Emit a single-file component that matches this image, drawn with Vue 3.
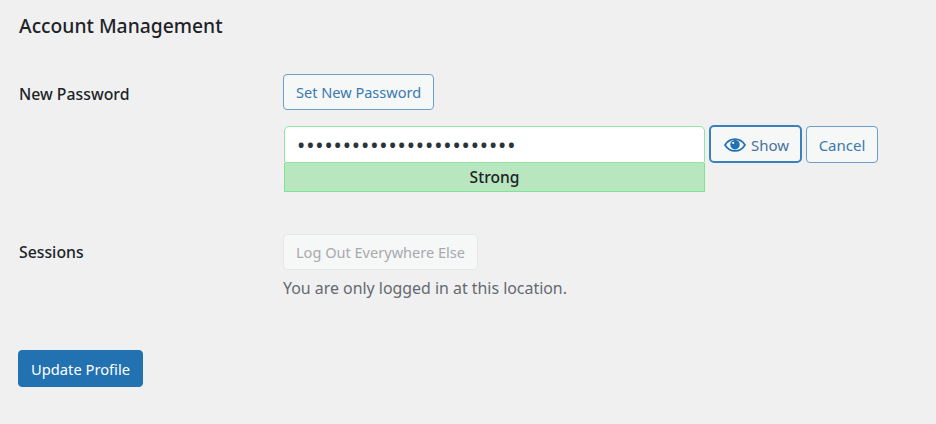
<script setup>
const dots = '•'.repeat(24)
</script>

<template>
  <main class="page">
    <h2 class="title">Account Management</h2>

    <section class="row password-row">
      <div class="label">New Password</div>
      <div class="field">
        <button class="btn" type="button">Set New Password</button>
        <div class="pass-line">
          <div class="pass-col">
            <div class="pass-input">{{ dots }}</div>
            <div class="strength">Strong</div>
          </div>
          <button class="btn show" type="button">
            <svg class="eye" viewBox="0 0 26 16" aria-hidden="true">
              <path d="M1.200 8C4 3.400 8.200 1 13 1s9 2.400 11.800 7c-2.800 4.600-7 7-11.800 7S4 12.600 1.200 8z" fill="none" stroke="#2271b1" stroke-width="2"/>
              <circle cx="13" cy="7.600" r="5.600" fill="#2271b1"/>
              <circle cx="10.800" cy="5.600" r="1.300" fill="#f6f7f7"/>
            </svg>
            <span class="lift">Show</span>
          </button>
          <button class="btn cancel" type="button"><span class="lift">Cancel</span></button>
        </div>
      </div>
    </section>

    <section class="row sessions-row">
      <div class="label">Sessions</div>
      <div class="field">
        <button class="btn disabled" type="button">Log Out Everywhere Else</button>
        <p class="note">You are only logged in at this location.</p>
      </div>
    </section>

    <button class="primary" type="button"><span class="lift">Update Profile</span></button>
  </main>
</template>

<style scoped>
.page {
  box-sizing: border-box;
  width: 936px;
  height: 424px;
  padding: 14px 0 0 18px;
  background: #f0f0f1;
  color: #1d2327;
  font-family: "Noto Sans", "Open Sans", sans-serif;
  overflow: hidden;
}
.title {
  margin: 0;
  padding-left: 1px;
  font-size: 19.300px;
  line-height: 24px;
  font-weight: 500;
}
.row {
  display: flex;
}
.label {
  width: 265px;
  flex: none;
  padding-left: 1px;
  box-sizing: border-box;
  font-size: 15.800px;
  line-height: 22px;
  font-weight: 500;
}
.password-row {
  margin-top: 36px;
}
.password-row .label {
  padding-top: 9px;
}
.field {
  display: flex;
  flex-direction: column;
  align-items: flex-start;
}
.btn {
  box-sizing: border-box;
  height: 36px;
  padding: 0 12px;
  border: 1px solid #6a9fcb;
  border-radius: 4px;
  background: #f6f7f7;
  color: #3a7ab0;
  font: 400 14.550px/1 "Noto Sans", "Open Sans", sans-serif;
  white-space: nowrap;
}
.lift {
  display: block;
  padding-top: 2px;
}
.pass-line {
  display: flex;
  align-items: flex-start;
  margin-top: 16px;
  margin-left: 1px;
}
.pass-col {
  width: 421px;
}
.pass-input {
  box-sizing: border-box;
  height: 37px;
  padding-left: 12px;
  border: 1px solid #8fe6a0;
  border-radius: 5px 5px 2px 2px;
  background: #fff;
  color: #2c3338;
  font: 400 22px/35px "Noto Sans", sans-serif;
  letter-spacing: 0.870px;
}
.strength {
  box-sizing: border-box;
  height: 29px;
  border: 1px solid #82e296;
  border-top: 0;
  background: #b8e6bf;
  color: #1d2327;
  font-size: 15.600px;
  font-weight: 500;
  line-height: 28px;
  text-align: center;
}
.show {
  display: flex;
  align-items: center;
  gap: 5px;
  width: 93px;
  height: 38px;
  margin-left: 4px;
  margin-top: -1px;
  padding: 0 12px 0 13px;
  border: 2px solid #3a80bd;
  border-radius: 5px;
  color: #47739c;
  font-size: 15px;
}
.eye {
  width: 22px;
  height: 14px;
  flex: none;
  margin-top: 2px;
}
.cancel {
  width: 72px;
  height: 37px;
  margin-left: 4px;
  padding: 0;
  text-align: center;
  font-size: 15px;
}
.sessions-row {
  margin-top: 42px;
}
.sessions-row .label {
  padding-top: 7px;
}
.disabled {
  border-color: #e6e7e8;
  color: #a7aaad;
}
.note {
  margin: 6px 0 0;
  color: #646970;
  font-size: 15.900px;
  line-height: 24px;
}
.primary {
  display: block;
  box-sizing: border-box;
  width: 125px;
  height: 37px;
  margin-top: 50px;
  padding: 0;
  border: 1px solid #2271b1;
  border-radius: 4px;
  background: #2271b1;
  color: #fff;
  font: 400 14.700px/1 "Noto Sans", "Open Sans", sans-serif;
}
</style>
